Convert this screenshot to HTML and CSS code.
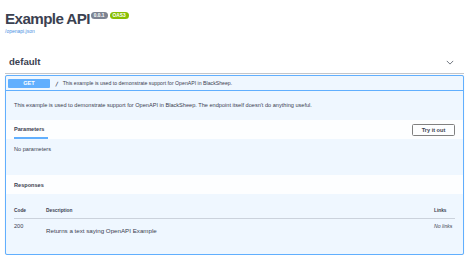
FILE: index.html
```html
<!DOCTYPE html>
<html>
<head>
  <link rel="stylesheet" href="styles.css">
</head>
<body>
  <div class="wrapper">
    <div class="info">
      <h2 class="title">Example API
        <span class="badges">
          <span class="version">0.0.1</span>
          <span class="version oas">OAS3</span>
        </span>
      </h2>
      <a class="url" href="#">/openapi.json</a>
    </div>

    <div class="tag">
      <h3 class="tag-name">default</h3>
      <svg class="arrow" width="8" height="5" viewBox="0 0 20 12" fill="none" stroke="#606570" stroke-width="2.2">
        <path d="M2 2l8 8 8-8"/>
      </svg>
    </div>

    <div class="opblock">
      <div class="summary">
        <span class="method">GET</span>
        <span class="path">/</span>
        <span class="summary-text">This example is used to demonstrate support for OpenAPI in BlackSheep.</span>
      </div>

      <div class="description">
        This example is used to demonstrate support for OpenAPI in BlackSheep. The endpoint itself doesn't do anything useful.
      </div>

      <div class="section-header">
        <div class="tab">Parameters</div>
        <button class="try-out">Try it out</button>
      </div>
      <div class="params-body">No parameters</div>

      <div class="section-header responses-header">
        <div class="section-title">Responses</div>
      </div>

      <div class="responses">
        <div class="row head">
          <div class="col-code">Code</div>
          <div class="col-desc">Description</div>
          <div class="col-links">Links</div>
        </div>
        <div class="row">
          <div class="col-code">200</div>
          <div class="col-desc"><p>Returns a text saying OpenAPI Example</p></div>
          <div class="col-links"><i>No links</i></div>
        </div>
      </div>
    </div>
  </div>
</body>
</html>
```

FILE: styles.css
```css
:root {
  --text: #3b4151;
  --get: #61affe;
  --get-bg: #eff7ff;
}

* {
  margin: 0;
  padding: 0;
  box-sizing: border-box;
}

body {
  background: #fff;
  color: var(--text);
  font-family: 'Liberation Sans', Arial, sans-serif;
}

.wrapper {
  padding: 0 10px 0 5px;
}

.info {
  padding-top: 9px;
}

.title {
  font-size: 15.2px;
  letter-spacing: -0.6px;
  line-height: 19px;
  font-weight: 700;
  display: flex;
  align-items: flex-start;
}

.badges {
  display: flex;
  gap: 2px;
  margin-left: 1px;
  margin-top: 3px;
}

.version {
  background: #7d8492;
  color: #fff;
  font-size: 4.8px;
  letter-spacing: 0;
  line-height: 7px;
  height: 7px;
  padding: 0 3px;
  border-radius: 10px;
  font-weight: 700;
}

.oas {
  background: #89bf04;
}

.url {
  display: block;
  font-size: 5px;
  line-height: 6px;
  color: #4990e2;
  text-decoration: none;
}

.tag {
  margin-top: 16px;
  display: flex;
  align-items: center;
  justify-content: space-between;
  padding: 0 10px 0 4px;
  height: 24px;
  border-bottom: 1px solid rgba(59, 65, 81, 0.3);
}

.tag-name {
  font-size: 9.6px;
  font-weight: 700;
}

.arrow {
  margin-top: 1px;
}

.opblock {
  margin-top: 1px;
  border: 1px solid var(--get);
  border-radius: 2px;
  background: var(--get-bg);
  box-shadow: 0 0 1px rgba(0, 0, 0, 0.19);
}

.summary {
  display: flex;
  align-items: center;
  height: 15px;
  padding: 0 2px;
  border-bottom: 1px solid var(--get);
}

.method {
  width: 42px;
  height: 9px;
  background: var(--get);
  color: #fff;
  font-size: 5.6px;
  font-weight: 700;
  line-height: 9px;
  text-align: center;
  border-radius: 1px;
}

.path {
  font-family: 'DejaVu Sans Mono', monospace;
  font-size: 6px;
  margin: 0 4px 0 5px;
  font-weight: 700;
}

.summary-text {
  font-size: 5.2px;
}

.description {
  padding: 10px 8px 0 8px;
  height: 29px;
  font-size: 5.6px;
  line-height: 8px;
}

.section-header {
  display: flex;
  align-items: center;
  justify-content: space-between;
  height: 19px;
  padding: 0 8px;
  background: rgba(255, 255, 255, 0.85);
  box-shadow: 0 0.4px 1px rgba(0, 0, 0, 0.1);
}

.tab {
  font-size: 5.6px;
  font-weight: 700;
  height: 19px;
  line-height: 19px;
  position: relative;
}

.tab::after {
  content: '';
  position: absolute;
  left: 0;
  bottom: 0;
  width: calc(100% + 4px);
  height: 1.6px;
  background: var(--get);
}

.try-out {
  font-family: inherit;
  font-size: 5.6px;
  font-weight: 700;
  color: var(--text);
  background: transparent;
  border: 1px solid #808080;
  border-radius: 1.6px;
  width: 43px;
  height: 12px;
}

.params-body {
  height: 36px;
  padding: 7px 8px 0;
  font-size: 5.6px;
}

.section-title {
  font-size: 5.6px;
  font-weight: 700;
}

.responses {
  padding: 14px 8px 20px;
}

.row {
  display: flex;
  font-size: 5.6px;
}

.row.head {
  font-size: 4.8px;
  font-weight: 700;
  padding-bottom: 5px;
  border-bottom: 1px solid rgba(59, 65, 81, 0.2);
  margin-bottom: 4px;
}

.col-code {
  width: 32px;
}

.col-desc {
  flex: 1;
}

.col-desc p {
  margin-top: 4px;
  font-size: 6.2px;
}

.col-links {
  width: 21px;
}

.col-links i {
  font-size: 5.2px;
}
```
